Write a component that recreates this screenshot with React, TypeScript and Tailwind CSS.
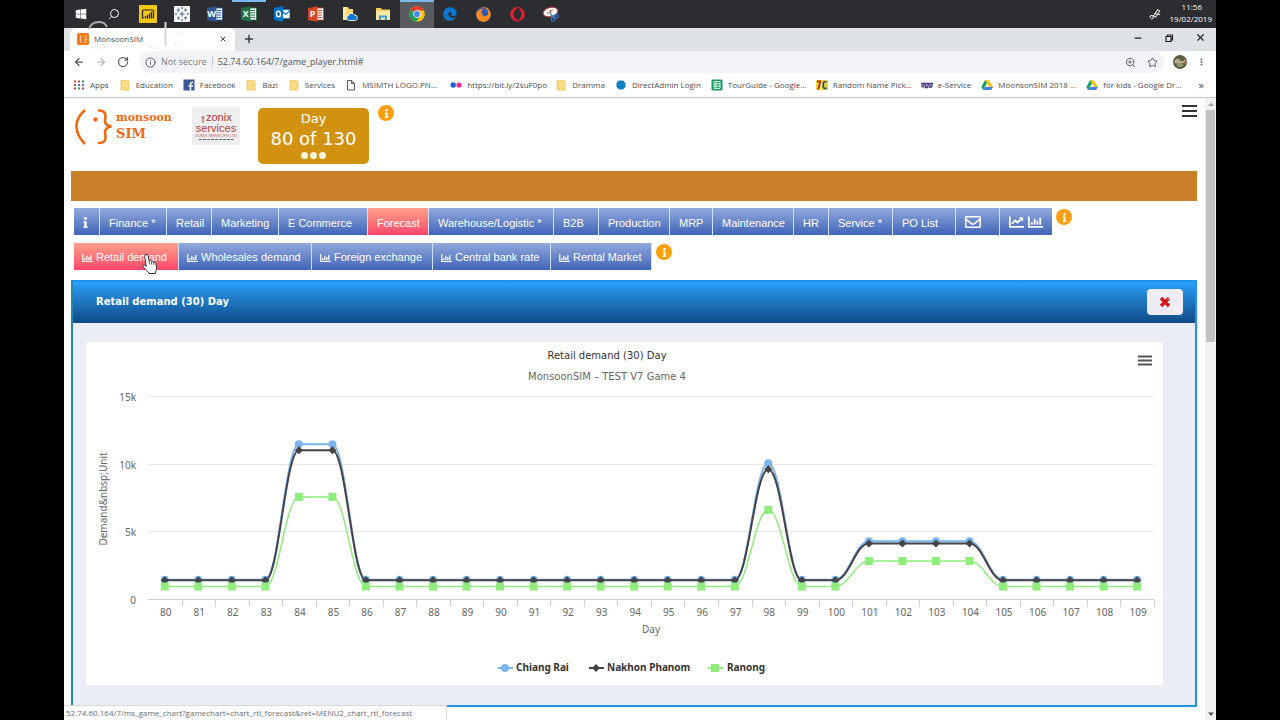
import type { ReactNode } from "react";
import { FaEdge, FaFirefox, FaInfo, FaOpera, FaRegEnvelope, FaWindows } from "react-icons/fa";
import { ArrowLeft, ArrowRight, Info, Minus, MoreVertical, Plus, RotateCw, Search, Star, X, ZoomIn } from "lucide-react";

const UI = "font-['Open_Sans','Noto_Sans',sans-serif]";

/* ---------- taskbar ---------- */

function OfficeIcon({ letter, color }: { letter: string; color: string }) {
    return (
        <svg viewBox="0 0 16 16" className="h-4 w-4">
            <rect x="8" y="2" width="7.5" height="12" fill="#fff" stroke={color} strokeWidth="0.8" />
            <path d="M10 4.5h4M10 6.8h4M10 9.1h4M10 11.4h4" stroke={color} strokeWidth="1" />
            <path d="M0 2 9.5 0.3v15.4L0 14z" fill={color} />
            <text x="4.7" y="11.3" textAnchor="middle" fontSize="9" fontWeight="700" fill="#fff" fontFamily="Open Sans, sans-serif">
                {letter}
            </text>
        </svg>
    );
}

function PowerBiIcon() {
    return (
        <svg viewBox="0 0 18 18" className="h-[18px] w-[18px]">
            <rect width="18" height="18" fill="#f2c811" />
            <path d="M5 13H3.5V6.2Q3.500 5 4.700 5h8.600q1.200 0 1.200 1.200V12q0 1-1 1" fill="none" stroke="#222" strokeWidth="1.200" />
            <path d="M6.500 13.500v-2.500M8.500 13.500v-3.500M10.500 13.500v-5M12.500 13.500v-6.500" stroke="#222" strokeWidth="1.300" />
        </svg>
    );
}

function TableauIcon() {
    return (
        <svg viewBox="0 0 16 16" className="h-4 w-4">
            <rect width="16" height="16" fill="#f4f6f8" />
            <g stroke="#4f7399" strokeWidth="1">
                <path d="M8 5.500v5M5.500 8h5" />
                <path d="M4.500 2.500v3M3 4h3M11.500 2.500v3M10 4h3M4.500 10.500v3M3 12h3M11.500 10.500v3M10 12h3" />
                <path d="M8 1v2M7 2h2M8 13v2M7 14h2M2 7v2M1 8h2M14 7v2M13 8h2" strokeWidth="0.800" />
            </g>
        </svg>
    );
}

function OutlookIcon() {
    return (
        <svg viewBox="0 0 16 16" className="h-4 w-4">
            <rect x="7" y="3.500" width="9" height="9" fill="#fff" stroke="#0072c6" strokeWidth="0.800" />
            <path d="m8 5 3.800 3.500L16 4.500" fill="none" stroke="#0072c6" strokeWidth="1.200" />
            <path d="M0 2 9 0.300v15.400L0 14z" fill="#0072c6" />
            <ellipse cx="4.500" cy="8" rx="2.100" ry="2.800" fill="none" stroke="#fff" strokeWidth="1.400" />
        </svg>
    );
}

function FolderCloudIcon() {
    return (
        <svg viewBox="0 0 16 16" className="h-4 w-4">
            <path d="M1 1h5l1 2h4v11H1z" fill="#f7d774" />
            <path d="M1 1h3v13H1z" fill="#fbe9a6" />
            <path d="M6.500 14.500a2.600 2.600 0 0 1 0-5 3 3 0 0 1 5.600-.6 2.800 2.800 0 0 1 1 5.600z" fill="#1279d0" stroke="#fff" strokeWidth="0.800" />
        </svg>
    );
}

function ExplorerIcon() {
    return (
        <svg viewBox="0 0 16 16" className="h-4 w-4">
            <path d="M1 2h5l1 1.500h8V14H1z" fill="#f5ce5b" />
            <path d="M1 5h14v9H1z" fill="#fde7a0" />
            <path d="M4 14V9.500h8V14h-2v-2.500H6V14z" fill="#3aa0dd" />
        </svg>
    );
}

function ChromeIcon() {
    return (
        <svg viewBox="0 0 16 16" className="h-4 w-4">
            <circle cx="8" cy="8" r="7.800" fill="#fbc116" />
            <path d="M8 8 1.300 4A7.800 7.800 0 0 1 14.900 4.400H8z" fill="#e33b2e" />
            <path d="M8 8 1.300 4A7.800 7.800 0 0 0 7.300 15.800L11.200 9.700z" fill="#1f9d57" />
            <circle cx="8" cy="8" r="3.700" fill="#fff" />
            <circle cx="8" cy="8" r="2.900" fill="#4285f4" />
        </svg>
    );
}

function SnipIcon() {
    return (
        <svg viewBox="0 0 18 16" className="h-4 w-[18px]">
            <ellipse cx="8.500" cy="6" rx="7.500" ry="4.500" fill="#fff" stroke="#c8384a" strokeWidth="1" transform="rotate(-14 8.500 6)" />
            <path d="m5 8 6-4.500M8 3.500l1 5" stroke="#a33" strokeWidth="0.800" />
            <path d="m8 8 6 5M14 8.500l-5 4" stroke="#3f78b8" strokeWidth="1.200" />
            <circle cx="14.500" cy="10" r="1.800" fill="none" stroke="#2f74c0" strokeWidth="1.200" />
            <circle cx="11" cy="13.500" r="1.800" fill="none" stroke="#2f74c0" strokeWidth="1.200" />
        </svg>
    );
}

const TASKS: { label: string; icon: ReactNode; state?: "open" | "active" }[] = [
    { label: "Start", icon: <FaWindows className="h-3 w-3 text-white" /> },
    { label: "Search", icon: <Search className="h-3 w-3 -scale-x-100 text-white" strokeWidth={2} /> },
    { label: "Power BI", icon: <PowerBiIcon /> },
    { label: "Tableau", icon: <TableauIcon /> },
    { label: "Word", icon: <OfficeIcon letter="W" color="#2b579a" /> },
    { label: "Excel", icon: <OfficeIcon letter="X" color="#1e7145" />, state: "open" },
    { label: "Outlook", icon: <OutlookIcon /> },
    { label: "PowerPoint", icon: <OfficeIcon letter="P" color="#d24726" /> },
    { label: "OneDrive", icon: <FolderCloudIcon /> },
    { label: "File Explorer", icon: <ExplorerIcon /> },
    { label: "Chrome", icon: <ChromeIcon />, state: "active" },
    { label: "Edge", icon: <FaEdge className="h-[14px] w-[14px] text-[#0a78d0]" /> },
    {
        label: "Firefox",
        icon: (
            <span className="rounded-full bg-[#2b57b8]">
                <FaFirefox className="h-[15px] w-[15px] text-[#fb8a1b]" />
            </span>
        ),
    },
    { label: "Opera", icon: <FaOpera className="h-[15px] w-[15px] text-[#e0202c]" /> },
    { label: "Snipping Tool", icon: <SnipIcon /> },
];

function Taskbar() {
    return (
        <div className="flex h-7 items-stretch justify-between bg-[#2b2d31]">
            <div className="grid w-[504px] grid-cols-15">
                {TASKS.map((t) => (
                    <button
                        key={t.label}
                        aria-label={t.label}
                        className={
                            "flex items-center justify-center border-t-2 pb-[2px] " +
                            (t.state === "active"
                                ? "border-[#76b9ed] bg-[#5a5b5e]"
                                : t.state === "open"
                                  ? "border-[#76b9ed]"
                                  : "border-transparent")
                        }
                    >
                        {t.icon}
                    </button>
                ))}
            </div>
            <div className="flex items-center gap-[9px] pr-1 text-white">
                <svg viewBox="0 0 14 14" className="h-3 w-3" fill="none" stroke="#e6e6e6" strokeWidth="1.200">
                    <path d="M1 11.500c0-3 3-3.500 4-2s-1 3.500-3 3M5 10l5-8 2.500 1.500-4.500 7zM6 6.500 13 8" />
                </svg>
                <div className={`${UI} pb-[2px] text-right text-[8px] leading-3`}>
                    <div className="pr-[10px]">11:56</div>
                    <div>19/02/2019</div>
                </div>
            </div>
        </div>
    );
}

/* ---------- browser chrome ---------- */

function TabStrip() {
    return (
        <div className={`${UI} relative flex h-[23px] items-stretch bg-[#dee1e6] pl-[6px]`}>
            <div className="flex w-[165px] items-center rounded-t-md bg-white pr-2 pb-[2px] pl-[7px]">
                <svg viewBox="0 0 12 12" className="h-3 w-3">
                    <rect width="12" height="12" rx="1.500" fill="#f07c1c" />
                    <path d="M4 2.500Q2.500 6 4 9.500M7.500 2.500q1.500 0 1.200 2 0 1.500 1 1.500-1 0-1 1.500.3 2-1.200 2" fill="none" stroke="#ffe3c4" strokeWidth="1" />
                </svg>
                <span className="ml-[5px] flex-1 text-[8px] leading-3 text-[#4a4d51]">MonsoonSIM</span>
                <button aria-label="Close tab">
                    <X className="h-2 w-2 text-[#45484c]" strokeWidth={3} />
                </button>
            </div>
            <button aria-label="New tab" className="ml-2 pb-[2px]">
                <Plus className="h-3 w-3 text-[#3c4043]" strokeWidth={3} />
            </button>
            <div className="ml-auto flex items-center gap-[21px] pr-[10px] pb-1 text-[#202124]">
                <button aria-label="Minimize">
                    <Minus className="h-[10px] w-[10px]" strokeWidth={3} />
                </button>
                <button aria-label="Restore">
                    <svg viewBox="0 0 10 10" className="h-[10px] w-[10px]" fill="none" stroke="currentColor" strokeWidth="1.200">
                        <path d="M2 3.500h5v5H2zM3.500 3.500V2h5v5H7" />
                    </svg>
                </button>
                <button aria-label="Close window">
                    <X className="h-[11px] w-[11px]" strokeWidth={2.5} />
                </button>
            </div>
            {/* leftover of the window fading out over the tab strip */}
            <svg viewBox="0 0 96 36" className="pointer-events-none absolute -top-2 left-6 h-9 w-24" fill="none">
                <path d="M1 9Q3 2 11 2q6 0 8 5" stroke="#a9aaac" strokeWidth="2" />
                <path d="M77.500 2v24" stroke="#d5d6d8" strokeWidth="2" />
                <path d="M1 24q5 6 14 4M20 25q4 5 9-1M60 24q6 8 12 2M86 24q5 3 8-3M87 14q5-5 8 2" stroke="#ececee" strokeWidth="1.500" strokeDasharray="2 1.500" />
            </svg>
        </div>
    );
}

function AddressBar() {
    return (
        <div className={`${UI} flex h-[22px] items-center bg-white pr-[10px] pl-[9px] text-[#55585c]`}>
            <button aria-label="Back">
                <ArrowLeft className="h-3 w-3" strokeWidth={2.5} />
            </button>
            <button aria-label="Forward" className="ml-[10px]">
                <ArrowRight className="h-3 w-3 text-[#b9bbbe]" strokeWidth={2.5} />
            </button>
            <button aria-label="Reload" className="ml-[10px]">
                <RotateCw className="h-3 w-3" strokeWidth={2.5} />
            </button>
            <div className="ml-[10px] flex h-[22px] flex-1 items-center rounded-full bg-[#f1f3f6] px-[6px]">
                <Info className="h-[11px] w-[11px]" strokeWidth={2} />
                <span className="ml-[5px] text-[9px] text-[#7b7e82]">Not secure</span>
                <span className="mx-[5px] h-[10px] w-px bg-[#c4c6c9]" />
                <input
                    aria-label="Address"
                    defaultValue="52.74.60.164/7/game_player.html#"
                    className="min-w-0 flex-1 bg-transparent text-[9px] outline-none"
                />
                <button aria-label="Zoom" className="mr-[11px]">
                    <ZoomIn className="h-[11px] w-[11px]" strokeWidth={2} />
                </button>
                <button aria-label="Bookmark this page">
                    <Star className="h-[11px] w-[11px]" strokeWidth={2} />
                </button>
            </div>
            <button aria-label="Profile" className="mr-[10px] ml-[9px]">
                <svg viewBox="0 0 14 14" className="h-[14px] w-[14px]">
                    <circle cx="7" cy="7" r="7" fill="#5d5a45" />
                    <path d="M2 5q3-3 5 0t5-1l1 3-6 2-6-1z" fill="#b4a98a" />
                    <path d="M3 9q4-2 8 1l-2 2H5z" fill="#8d9b6b" />
                    <path d="M11 6.500 13.500 8l-2 2z" fill="#c0603a" />
                </svg>
            </button>
            <button aria-label="Menu">
                <MoreVertical className="h-3 w-[9px]" strokeWidth={3} />
            </button>
        </div>
    );
}

const folder = (
    <svg viewBox="0 0 12 12" className="h-3 w-3">
        <path d="M2 1.500h6l2 1V11H2z" fill="#f8dc86" stroke="#e7c25c" strokeWidth="0.800" />
    </svg>
);

const drive = (
    <svg viewBox="0 0 12 12" className="h-3 w-3">
        <path d="M4.200 1h3.600L12 8H8.300z" fill="#fbc41a" />
        <path d="M4.200 1 0.300 8l1.800 3L6 4.200z" fill="#1b9e5a" />
        <path d="M3.900 8H12l-1.900 3H2.100z" fill="#3f7fe6" />
    </svg>
);

const BOOKMARKS: { label: string; icon: ReactNode; wide?: boolean }[] = [
    {
        label: "Apps",
        icon: (
            <svg viewBox="0 0 12 12" className="h-3 w-3">
                <path d="M1 2.500h2M1 6h2M1 9.500h2" stroke="#d8433b" strokeWidth="2" />
                <path d="M5 2.500h2M9 9.500h2" stroke="#c8453e" strokeWidth="2" />
                <path d="M5 6h2M9 6h2" stroke="#3f74c9" strokeWidth="2" />
                <path d="M9 2.500h2M5 9.500h2" stroke="#3f8f55" strokeWidth="2" />
            </svg>
        ),
    },
    { label: "Education", icon: folder },
    {
        label: "Facebook",
        icon: (
            <svg viewBox="0 0 12 12" className="h-3 w-3">
                <rect x="0.500" y="0.500" width="11" height="11" fill="#3b5998" />
                <path d="M7.500 11.500V5q0-1.500 1.500-1.500h1M5.500 7H10" fill="none" stroke="#fff" strokeWidth="1.600" />
            </svg>
        ),
    },
    { label: "Bazi", icon: folder },
    { label: "Services", icon: folder },
    {
        label: "MSIMTH LOGO.PN...",
        wide: true,
        icon: (
            <svg viewBox="0 0 12 12" className="h-3 w-3" fill="none" stroke="#55585c" strokeWidth="1">
                <path d="M2.500 1.500h4L9.500 4.500v6.500h-7zM6.500 1.500v3h3" />
            </svg>
        ),
    },
    {
        label: "https://bit.ly/2suF0po",
        wide: true,
        icon: (
            <svg viewBox="0 0 12 12" className="h-3 w-3">
                <circle cx="3.200" cy="6" r="2.700" fill="#1063d8" />
                <circle cx="9" cy="6" r="2.600" fill="#e8268c" />
            </svg>
        ),
    },
    { label: "Dramma", icon: folder },
    {
        label: "DirectAdmin Login",
        icon: (
            <svg viewBox="0 0 12 12" className="h-3 w-3">
                <path d="M4 1.500h4L10.500 4v4L8 10.500H4L1.500 8V4z" fill="#1180c4" />
            </svg>
        ),
    },
    {
        label: "TourGuide - Google...",
        wide: true,
        icon: (
            <svg viewBox="0 0 12 12" className="h-3 w-3">
                <rect x="0.500" y="0.500" width="11" height="11" rx="1" fill="#169a62" />
                <path d="M3 2.500h6v7H3zM3 4.800h6M3 7.100h6M5 2.500v7" fill="none" stroke="#e8f8f0" strokeWidth="0.900" />
            </svg>
        ),
    },
    {
        label: "Random Name Pick...",
        wide: true,
        icon: (
            <svg viewBox="0 0 12 12" className="h-3 w-3">
                <path d="M0 1h5v10H0z" fill="#e9df3c" />
                <path d="M6 1h6v10H6z" fill="#d9d23a" />
                <path d="M1 2.500h3.500L2 10.500" fill="none" stroke="#c5271f" strokeWidth="1.800" />
                <path d="M10.500 3Q7 2 7 6t3.500 3.500" fill="none" stroke="#33447e" strokeWidth="1.600" />
            </svg>
        ),
    },
    {
        label: "e-Service",
        icon: (
            <svg viewBox="0 0 12 12" className="h-3 w-3" fill="none" stroke="#46307e" strokeWidth="1.300">
                <path d="M1 8.500V4.500h2.500L2.500 8.500M5 4.500h2.500L6.500 8.500H4.500zM9 4.500h2.500L10.500 8H8.500z" />
            </svg>
        ),
    },
    { label: "MoonsonSIM 2018 ...", wide: true, icon: drive },
    { label: "for kids - Google Dr...", wide: true, icon: drive },
];

function BookmarksBar() {
    return (
        <div className={`${UI} flex h-6 items-center gap-[10px] bg-white pr-3 pl-[9px] text-[8px] text-[#4a4d51]`}>
            {BOOKMARKS.map((b) => (
                <a key={b.label} href="#" className="flex items-center gap-[5px] whitespace-nowrap">
                    {b.icon}
                    <span className={b.wide ? "w-[78px]" : ""}>{b.label}</span>
                </a>
            ))}
            <button aria-label="More bookmarks" className="ml-auto text-[11px] leading-3">
                »
            </button>
        </div>
    );
}

/* ---------- game page ---------- */

function InfoDot() {
    return (
        <button aria-label="Help" className="flex h-4 w-4 shrink-0 items-center justify-center rounded-full bg-[#faa00f]">
            <FaInfo className="h-[9px] w-[9px] text-white" />
        </button>
    );
}

function BarChartIcon({ className }: { className: string }) {
    return (
        <svg viewBox="0 0 16 12" className={className} fill="none" stroke="currentColor">
            <path d="M0.900 0v11.100H16" strokeWidth="1.800" />
            <path d="M4 9V6M7 9V2.500M10 9V4.500M13 9V1.500" strokeWidth="1.900" />
        </svg>
    );
}

function LineChartIcon({ className }: { className: string }) {
    return (
        <svg viewBox="0 0 16 12" className={className} fill="none" stroke="currentColor">
            <path d="M0.900 0v11.100H16" strokeWidth="1.800" />
            <path d="m3 8 3.500-3.500 2.500 2L13 2.800" strokeWidth="2" />
            <path d="M10.500 1H15v4.500z" fill="currentColor" stroke="none" />
        </svg>
    );
}

function ZonixLogo() {
    return (
        <svg viewBox="0 0 48 38" className="mt-[2px] ml-[18px] h-[38px] w-12 font-['Liberation_Sans',Arial,sans-serif]">
            <rect width="48" height="38" fill="#efefef" />
            <path d="M11 10v6M9.500 10h3" stroke="#a8433d" strokeWidth="1" />
            <text x="14" y="14" fontSize="11" fill="#a8332f">
                zonix
            </text>
            <text x="24" y="25" textAnchor="middle" fontSize="11" fill="#b8403a">
                services
            </text>
            <text x="24" y="30" textAnchor="middle" fontSize="4" fill="#c9554d">
                ZONIX SERVICES LTD
            </text>
            <path d="M7 32.500h34" stroke="#6c6c74" strokeDasharray="3 1" />
        </svg>
    );
}

function Header() {
    return (
        <header className="flex h-[73px] items-start pt-[7px] pl-1">
            <svg viewBox="0 0 38 38" className="mt-[3px] h-[38px] w-[38px]" fill="none" stroke="#ea6b12">
                <path d="M10 2Q1 10 1.500 19T10 36" strokeWidth="2.600" />
                <path d="M23 2.500q7-.5 7.500 5 0 2.500-.5 5-.3 5 6.500 6-6.500 1-6.500 6 .5 3 .5 5.500-.5 5.500-7.500 5" strokeWidth="2.600" />
                <circle cx="20.500" cy="11.500" r="1.800" fill="#ea6b12" strokeWidth="1" />
            </svg>
            <div className="mt-[3px] ml-[3px] w-[58px] pt-[2px] font-['DejaVu_Serif',serif] font-bold text-[#ea6b12]">
                <div className="text-[11px] leading-4">monsoon</div>
                <div className="text-[13px] leading-4">SIM</div>
            </div>
            <ZonixLogo />
            <div className="mt-[3px] ml-[18px] flex h-14 w-[111px] flex-col items-center rounded-[5px] bg-[#d0920f] pt-[3px] font-['DejaVu_Sans',sans-serif] text-white">
                <span className="text-[13px] leading-4">Day</span>
                <span className="text-[18px] leading-6">80 of 130</span>
                <span className="mt-px flex gap-[2px]">
                    <i className="h-[7px] w-[7px] rounded-full bg-[#fff4dc]" />
                    <i className="h-[7px] w-[7px] rounded-full bg-[#fff4dc]" />
                    <i className="h-[7px] w-[7px] rounded-full bg-[#fff4dc]" />
                </span>
            </div>
            <div className="ml-[9px]">
                <InfoDot />
            </div>
            <button aria-label="Open menu" className="ml-auto flex flex-col gap-[3px]">
                <i className="h-[2px] w-[15px] bg-[#333]" />
                <i className="h-[2px] w-[15px] bg-[#333]" />
                <i className="h-[2px] w-[15px] bg-[#333]" />
            </button>
        </header>
    );
}

const BLUE = "bg-linear-to-b from-[#93a9dc] to-[#4164b8]";
const RED = "bg-linear-to-b from-[#ffa08a] to-[#fb426b]";

const MENU: { label: string; width: string; icon?: ReactNode; active?: boolean }[] = [
    { label: "Info", width: "w-[26px]", icon: <FaInfo className="h-[11px] w-[5px]" /> },
    { label: "Finance *", width: "w-[67px]" },
    { label: "Retail", width: "w-[45px]" },
    { label: "Marketing", width: "w-[67px]" },
    { label: "E Commerce", width: "w-[89px]" },
    { label: "Forecast", width: "w-[61px]", active: true },
    { label: "Warehouse/Logistic *", width: "w-[125px]" },
    { label: "B2B", width: "w-[45px]" },
    { label: "Production", width: "w-[71px]" },
    { label: "MRP", width: "w-[43px]" },
    { label: "Maintenance", width: "w-[81px]" },
    { label: "HR", width: "w-[35px]" },
    { label: "Service *", width: "w-[64px]" },
    { label: "PO List", width: "w-[63px]" },
    { label: "Messages", width: "w-[44px]", icon: <FaRegEnvelope className="h-4 w-4" /> },
    {
        label: "Reports",
        width: "w-[52px]",
        icon: (
            <span className="flex gap-[4px]">
                <LineChartIcon className="h-3 w-[15px]" />
                <BarChartIcon className="h-3 w-[15px]" />
            </span>
        ),
    },
];

const SUBMENU = [
    { label: "Retail demand", width: "w-[105px]", active: true },
    { label: "Wholesales demand", width: "w-[133px]" },
    { label: "Foreign exchange", width: "w-[121px]" },
    { label: "Central bank rate", width: "w-[118px]" },
    { label: "Rental Market", width: "w-[101px]" },
];

function HandCursor() {
    return (
        <svg viewBox="0 0 18 21" className="pointer-events-none absolute top-[10px] left-[67px] z-10 h-[21px] w-[18px]">
            <path
                d="M5 1.500q1.800-.6 2.200 1.300L8 7.500q1.600-.9 2.300.6 1.600-.6 2.200.8 2-.3 2.400 1.600l.7 4q.2 2-1 4.500l-.2 1.500H8l-.8-1.500Q4 16 2 13.500q-.8-1.600 1-1.700 1.200.2 2.300 1.600L3.700 3.500Q3.500 2 5 1.500z"
                fill="#fff"
                stroke="#333"
                strokeWidth="1"
            />
            <path d="M8 7.500l.5 4M10.300 8.300l.4 3.200M12.500 9l.3 2.800" stroke="#333" strokeWidth="0.800" />
        </svg>
    );
}

function Menus() {
    return (
        <nav className="pt-[7px] pl-[3px] font-['Liberation_Sans',Arial,sans-serif] text-[11px] text-white">
            <div className="flex items-start">
                {MENU.map((m) => (
                    <button
                        key={m.label}
                        aria-label={m.label}
                        className={`flex h-[27px] shrink-0 items-center border-r border-[#cfe2fb] pl-[9px] whitespace-nowrap last-of-type:border-r-0 ${m.icon ? "pt-px" : "pt-[3px]"} ${m.width} ${m.active ? RED : BLUE}`}
                    >
                        {m.icon ?? m.label}
                    </button>
                ))}
                <div className="mt-px ml-1">
                    <InfoDot />
                </div>
            </div>
            <div className="mt-2 flex items-start">
                {SUBMENU.map((m) => (
                    <button
                        key={m.label}
                        className={`relative flex h-[27px] shrink-0 items-center gap-[3px] border-r border-[#cfe2fb] pt-[2px] pl-2 whitespace-nowrap ${m.width} ${m.active ? RED : BLUE}`}
                    >
                        <BarChartIcon className="h-[8px] w-[11px]" />
                        {m.label}
                        {m.active && <HandCursor />}
                    </button>
                ))}
                <div className="mt-px ml-1">
                    <InfoDot />
                </div>
            </div>
        </nav>
    );
}

/* ---------- chart ---------- */

const DAYS = Array.from({ length: 30 }, (_, i) => 80 + i);
const LEFT = 62;
const STEP = 33.53;
const BASE = 257.5;
const PX_PER_K = 13.5;

// base demand with the peaks of days 84-85, 98 and 101-104
const demand = (base: number, first: number, second: number, third: number) =>
    DAYS.map((d) => (d === 84 || d === 85 ? first : d === 98 ? second : d >= 101 && d <= 104 ? third : base));

const SERIES = [
    { name: "Chiang Rai", color: "#7cb5ec", shape: "circle", values: demand(1.47, 11.5, 10.1, 4.32) },
    { name: "Nakhon Phanom", color: "#434348", shape: "diamond", values: demand(1.42, 11.05, 9.65, 4.15) },
    { name: "Ranong", color: "#90ed7d", shape: "square", values: demand(0.96, 7.6, 6.63, 2.85) },
];

type Point = { x: number; y: number };

const toPoints = (values: number[]): Point[] =>
    values.map((v, i) => ({ x: LEFT + STEP * (i + 0.5), y: BASE - v * PX_PER_K }));

function spline(pts: Point[]) {
    let d = `M${pts[0].x} ${pts[0].y}`;
    let out = pts[0];
    for (let i = 1; i < pts.length; i++) {
        const p = pts[i];
        const prev = pts[i - 1];
        const next = pts[i + 1];
        let left = p;
        let right = p;
        if (next) {
            const lx = (1.5 * p.x + prev.x) / 2.5;
            const rx = (1.5 * p.x + next.x) / 2.5;
            let ly = (1.5 * p.y + prev.y) / 2.5;
            let ry = (1.5 * p.y + next.y) / 2.5;
            const fix = ((ry - ly) * (rx - p.x)) / (rx - lx) + p.y - ry;
            ly += fix;
            ry += fix;
            if (ly > prev.y && ly > p.y) {
                ly = Math.max(prev.y, p.y);
                ry = 2 * p.y - ly;
            } else if (ly < prev.y && ly < p.y) {
                ly = Math.min(prev.y, p.y);
                ry = 2 * p.y - ly;
            }
            if (ry > next.y && ry > p.y) {
                ry = Math.max(next.y, p.y);
                ly = 2 * p.y - ry;
            } else if (ry < next.y && ry < p.y) {
                ry = Math.min(next.y, p.y);
                ly = 2 * p.y - ry;
            }
            left = { x: lx, y: ly };
            right = { x: rx, y: ry };
        }
        d += `C${out.x} ${out.y} ${left.x} ${left.y} ${p.x} ${p.y}`;
        out = right;
    }
    return d;
}

function Marker({ x, y, shape, color }: { x: number; y: number; shape: string; color: string }) {
    if (shape === "circle") return <circle cx={x} cy={y} r="4" fill={color} />;
    if (shape === "square") return <rect x={x - 4} y={y - 4} width="8" height="8" fill={color} />;
    return <path d={`M${x} ${y - 4}l4 4-4 4-4-4z`} fill={color} />;
}

const LEGEND = [
    { x: 412, label: 430 },
    { x: 503, label: 521 },
    { x: 622, label: 641 },
];

function DemandChart() {
    return (
        <svg viewBox="0 0 1077 343" className="block h-auto w-full bg-white font-['Noto_Sans',sans-serif]" fill="#666">
            <g textAnchor="middle" fontSize="10" className="font-['DejaVu_Sans',sans-serif]">
                <text x="521" y="17" fill="#333">
                    Retail demand (30) Day
                </text>
                <text x="521" y="38">MonsoonSIM – TEST V7 Game 4</text>
            </g>
            <path d="M1052 14.500h14M1052 18.500h14M1052 22.500h14" stroke="#555" strokeWidth="2" />

            {[15, 10, 5].map((v) => (
                <path key={v} d={`M${LEFT} ${Math.round(BASE - v * PX_PER_K) - 0.5}H1067`} stroke="#e6e6e6" />
            ))}
            <path d="M62 257.500H1068" stroke="#ccd0d8" />
            {DAYS.map((d, i) => (
                <path key={d} d={`M${Math.round(LEFT + STEP * (i + 1)) + 0.5} 258v7`} stroke="#ccd0d8" />
            ))}
            {[15, 10, 5, 0].map((v) => (
                <text key={v} x="50" y={BASE - v * PX_PER_K + 4} textAnchor="end" fontSize="10">
                    {v ? `${v}k` : "0"}
                </text>
            ))}
            {DAYS.map((d, i) => (
                <text key={d} x={LEFT + STEP * (i + 0.5) + 1} y="274" textAnchor="middle" fontSize="10">
                    {d}
                </text>
            ))}
            <text x="21" y="157" textAnchor="middle" fontSize="10" transform="rotate(-90 21 157)">
                {"Demand&nbsp;Unit"}
            </text>
            <text x="565" y="291" textAnchor="middle" fontSize="10">
                Day
            </text>

            {SERIES.map((s) => {
                const pts = toPoints(s.values);
                return (
                    <g key={s.name}>
                        <path d={spline(pts)} fill="none" stroke={s.color} strokeWidth={s.shape === "square" ? 1.5 : 2} />
                        {pts.map((p) => (
                            <Marker key={p.x} x={p.x} y={p.y} shape={s.shape} color={s.color} />
                        ))}
                    </g>
                );
            })}

            {SERIES.map((s, i) => (
                <g key={s.name}>
                    <path d={`M${LEGEND[i].x} 326h15`} stroke={s.color} strokeWidth="2" />
                    <Marker x={LEGEND[i].x + 7} y={326} shape={s.shape} color={s.color} />
                    <text x={LEGEND[i].label} y="329" fontSize="10" fontWeight="700" fill="#333">
                        {s.name}
                    </text>
                </g>
            ))}
        </svg>
    );
}

function ChartPanel() {
    return (
        <section className="mt-[10px] border-2 border-[#1f93ec] border-l-[#1f86b4] bg-[#ebedf6]">
            <div className="flex h-[41px] items-center justify-between bg-linear-to-b from-[#2ba1fb] to-[#114a85] pr-3 pb-[2px] pl-[23px]">
                <h2 className="font-['DejaVu_Sans',sans-serif] text-[10px] font-bold text-white">Retail demand (30) Day</h2>
                <button
                    aria-label="Close panel"
                    className="flex h-[26px] w-9 items-center justify-center rounded bg-[#eeedf5]"
                >
                    <svg viewBox="0 0 12 12" className="h-3 w-3">
                        <path d="m2 2 8 8M10 2 2 10" stroke="#d3161c" strokeWidth="3.400" />
                        <path d="m7.500 3 2-2 1.500 1.500-1.500 1.500" fill="#f08a8a" />
                    </svg>
                </button>
            </div>
            <div className="pt-[19px] pr-8 pb-5 pl-[13px]">
                <DemandChart />
            </div>
        </section>
    );
}

function Scrollbar() {
    return (
        <div className="flex w-[11px] shrink-0 flex-col items-center bg-[#f1f1f1] py-1">
            <svg viewBox="0 0 6 4" className="h-1 w-[6px]">
                <path d="M0 4 3 0.500 6 4z" fill="#a3a3a3" />
            </svg>
            <div className="mt-1 h-[232px] w-[9px] bg-[#c1c1c1]" />
            <svg viewBox="0 0 6 4" className="mt-auto h-1 w-[6px]">
                <path d="M0 0.500h6L3 4z" fill="#505050" />
            </svg>
        </div>
    );
}

export default function App() {
    return (
        <div className="min-h-screen bg-black px-16">
            <div className="relative flex min-h-screen flex-col bg-white">
                <Taskbar />
                <TabStrip />
                <AddressBar />
                <BookmarksBar />
                <div className="flex flex-1 border-t border-[#c9cacc]">
                    <main className="min-w-0 flex-1 pr-2 pb-[13px] pl-[7px]">
                        <Header />
                        <div className="h-[30px] bg-[#c98028]" />
                        <Menus />
                        <ChartPanel />
                    </main>
                    <Scrollbar />
                </div>
                <div
                    className={`${UI} absolute bottom-0 left-0 h-[15px] w-[383px] border-t border-r border-[#d9dadd] bg-white pl-[2px] text-[8px] leading-[14px] text-[#6a6d71]`}
                >
                    52.74.60.164/7/ms_game_chart?gamechart=chart_rtl_forecast&amp;ret=MENU2_chart_rtl_forecast
                </div>
            </div>
        </div>
    );
}
